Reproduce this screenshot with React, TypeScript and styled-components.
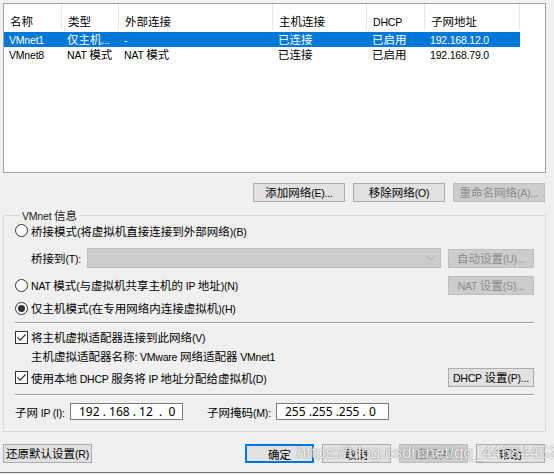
import React from "react";
import styled, { createGlobalStyle, css } from "styled-components";

const GlobalStyle = createGlobalStyle`
    html, body {
        margin: 0;
        padding: 0;
        background: #f0f0f0;
    }
    body {
        font-family: "Noto Sans CJK SC", "Noto Sans", sans-serif;
        font-size: 11.5px;
        color: #000;
    }
`;

const Dialog = styled.div`
    position: relative;
    width: 554px;
    height: 473px;
    box-sizing: border-box;
    padding: 3px 8px 0 3px;
    border-bottom: 1px solid #6b6b6b;
    display: flex;
    flex-direction: column;
    overflow: hidden;
`;

// The Windows UI font draws Latin text much narrower than the CJK glyphs
const Latin = styled.span`
    font-family: "Liberation Sans", Arial, sans-serif;
    font-size: 10.5px;
    letter-spacing: -0.2px;
`;

function Txt({ children }: { children: string }) {
    const parts = children.split(/([\x20-\x7E]+)/).filter((s) => s !== "");
    return (
        <span>
            {parts.map((s, i) =>
                /^[\x20-\x7E]+$/.test(s) ? <Latin key={i}>{s}</Latin> : <React.Fragment key={i}>{s}</React.Fragment>
            )}
        </span>
    );
}

const ListView = styled.div`
    width: 543px;
    height: 170px;
    box-sizing: border-box;
    border: 1px solid #a0a0a0;
    background: #fff;
`;

const HeaderRow = styled.div`
    display: flex;
    height: 26px;
`;

const HeaderCell = styled.div<{ $w: number }>`
    width: ${(p) => p.$w}px;
    box-sizing: border-box;
    padding: 9px 0 0 6px;
    line-height: 16px;
    border-right: 1px solid #e5e5e5;
    white-space: nowrap;
`;

const ItemRows = styled.div`
    margin-top: 2px;
`;

const ItemRow = styled.div<{ $selected?: boolean }>`
    display: flex;
    width: 516px;
    height: 15px;
    line-height: 15px;
    ${(p) =>
        p.$selected &&
        css`
            background: #0078d7;
            color: #fff;
        `}
`;

const ItemCell = styled.div<{ $w: number }>`
    width: ${(p) => p.$w}px;
    box-sizing: border-box;
    padding-left: 5px;
    white-space: nowrap;
    overflow: hidden;
`;

const ListButtons = styled.div`
    display: flex;
    justify-content: flex-end;
    gap: 8px;
    margin: 10px 1px 0 0;
`;

const Button = styled.button<{ $w: number; $default?: boolean }>`
    width: ${(p) => p.$w}px;
    height: 19px;
    padding: 0;
    box-sizing: border-box;
    background: #e1e1e1;
    border: 1px solid #adadad;
    font-family: inherit;
    font-size: 11.5px;
    line-height: 16px;
    color: #000;
    white-space: nowrap;
    &:disabled {
        background: #cccccc;
        border-color: #bfbfbf;
        color: #8a8a8a;
    }
    ${(p) =>
        p.$default &&
        css`
            border: 2px solid #0078d7;
        `}
`;

const Group = styled.fieldset`
    margin: 6px 0 0 0;
    padding: 0 11px 11px 11px;
    width: 543px;
    box-sizing: border-box;
    border: 1px solid #dcdcdc;
    min-width: 0;
`;

const Legend = styled.legend`
    padding: 0 2px;
    margin-left: 5px;
    line-height: 14px;
    color: #1a1a1a;
`;

const Row = styled.div<{ $h: number; $top: number; $indent?: number }>`
    display: flex;
    align-items: center;
    height: ${(p) => p.$h}px;
    margin-top: ${(p) => p.$top}px;
    padding-left: ${(p) => p.$indent ?? 0}px;
    white-space: nowrap;
`;

const Spacer = styled.div`
    flex: 1;
`;

const RadioMark = styled.span<{ $checked?: boolean }>`
    width: 13px;
    height: 13px;
    box-sizing: border-box;
    border: 1px solid #333;
    border-radius: 50%;
    background: #fff;
    display: inline-flex;
    align-items: center;
    justify-content: center;
    margin-right: 3px;
    flex: none;
    &::after {
        content: "";
        width: 7px;
        height: 7px;
        border-radius: 50%;
        background: ${(p) => (p.$checked ? "#333" : "transparent")};
    }
`;

const CheckMark = styled.span`
    width: 13px;
    height: 13px;
    box-sizing: border-box;
    border: 1px solid #333;
    background: #fff;
    display: inline-flex;
    align-items: center;
    justify-content: center;
    margin-right: 3px;
    flex: none;
`;

const Separator = styled.div<{ $top: number }>`
    height: 1px;
    background: #a0a0a0;
    margin-top: ${(p) => p.$top}px;
    box-shadow: 0 1px 0 #fff;
`;

const Select = styled.div`
    width: 354px;
    height: 20px;
    box-sizing: border-box;
    background: #cccccc;
    border: 1px solid #bfbfbf;
    display: flex;
    align-items: center;
    justify-content: flex-end;
    padding-right: 4px;
`;

const Label = styled.span<{ $w: number; $pad?: number }>`
    width: ${(p) => p.$w}px;
    padding-left: ${(p) => p.$pad ?? 0}px;
    box-sizing: border-box;
    flex: none;
`;

const Field = styled.div<{ $w: number }>`
    width: ${(p) => p.$w}px;
    height: 17px;
    box-sizing: border-box;
    background: #fff;
    border: 1px solid #7a7a7a;
    padding-left: 8px;
    font-family: "Noto Sans", sans-serif;
    font-size: 12px;
    line-height: 15px;
    white-space: pre;
`;

const Footer = styled.div`
    display: flex;
    gap: 8px;
    margin: 12px 1px 0 0;
`;

const Watermark = styled.div`
    position: absolute;
    left: 297px;
    top: 442px;
    font-family: "Liberation Sans", Arial, sans-serif;
    font-size: 17px;
    line-height: 22px;
    color: rgba(255, 255, 255, 0.9);
    text-shadow: 0 0 1px rgba(0, 0, 0, 0.45), 0 0 2px rgba(0, 0, 0, 0.2);
    pointer-events: none;
    white-space: nowrap;
`;

const columns = [
    { title: "名称", w: 58 },
    { title: "类型", w: 57 },
    { title: "外部连接", w: 154 },
    { title: "主机连接", w: 94 },
    { title: "DHCP", w: 58 },
    { title: "子网地址", w: 95 },
];

const networks = [
    ["VMnet1", "仅主机...", "-", "已连接", "已启用", "192.168.12.0"],
    ["VMnet8", "NAT 模式", "NAT 模式", "已连接", "已启用", "192.168.79.0"],
];

function Radio({ checked, label }: { checked?: boolean; label: string }) {
    return (
        <>
            <RadioMark $checked={checked} />
            <Txt>{label}</Txt>
        </>
    );
}

function Check({ label }: { label: string }) {
    return (
        <>
            <CheckMark>
                <svg width="11" height="11" viewBox="0 0 11 11">
                    <path d="M1.5 5.5 L4.2 8.2 L9.5 2.5" fill="none" stroke="#333" strokeWidth="1.2" />
                </svg>
            </CheckMark>
            <Txt>{label}</Txt>
        </>
    );
}

export default function App(): JSX.Element {
    return (
        <Dialog>
            <GlobalStyle />
            <ListView>
                <HeaderRow>
                    {columns.map((c) => (
                        <HeaderCell key={c.title} $w={c.w}>
                            <Txt>{c.title}</Txt>
                        </HeaderCell>
                    ))}
                </HeaderRow>
                <ItemRows>
                    {networks.map((n, i) => (
                        <ItemRow key={n[0]} $selected={i === 0}>
                            {n.map((v, j) => (
                                <ItemCell key={j} $w={columns[j].w}>
                                    <Txt>{v}</Txt>
                                </ItemCell>
                            ))}
                        </ItemRow>
                    ))}
                </ItemRows>
            </ListView>

            <ListButtons>
                <Button $w={92}>
                    <Txt>添加网络(E)...</Txt>
                </Button>
                <Button $w={92}>
                    <Txt>移除网络(O)</Txt>
                </Button>
                <Button $w={92} disabled>
                    <Txt>重命名网络(A)...</Txt>
                </Button>
            </ListButtons>

            <Group>
                <Legend>
                    <Txt>VMnet 信息</Txt>
                </Legend>
                <Row $h={15} $top={0}>
                    <Radio label="桥接模式(将虚拟机直接连接到外部网络)(B)" />
                </Row>
                <Row $h={20} $top={10} $indent={16}>
                    <Label $w={56}>
                        <Txt>桥接到(T):</Txt>
                    </Label>
                    <Select>
                        <svg width="10" height="6" viewBox="0 0 10 6">
                            <path d="M1 1 L5 5 L9 1" fill="none" stroke="#a8a8a8" strokeWidth="1" />
                        </svg>
                    </Select>
                    <Spacer />
                    <Button $w={86} disabled>
                        <Txt>自动设置(U)...</Txt>
                    </Button>
                </Row>
                <Row $h={18} $top={8}>
                    <Radio label="NAT 模式(与虚拟机共享主机的 IP 地址)(N)" />
                    <Spacer />
                    <Button $w={86} disabled>
                        <Txt>NAT 设置(S)...</Txt>
                    </Button>
                </Row>
                <Row $h={16} $top={6}>
                    <Radio checked label="仅主机模式(在专用网络内连接虚拟机)(H)" />
                </Row>
                <Separator $top={6} />
                <Row $h={16} $top={6}>
                    <Check label="将主机虚拟适配器连接到此网络(V)" />
                </Row>
                <Row $h={16} $top={3} $indent={16}>
                    <Txt>主机虚拟适配器名称: VMware 网络适配器 VMnet1</Txt>
                </Row>
                <Row $h={19} $top={4}>
                    <Check label="使用本地 DHCP 服务将 IP 地址分配给虚拟机(D)" />
                    <Spacer />
                    <Button $w={86}>
                        <Txt>DHCP 设置(P)...</Txt>
                    </Button>
                </Row>
                <Separator $top={7} />
                <Row $h={17} $top={8}>
                    <Label $w={55}>
                        <Txt>子网 IP (I):</Txt>
                    </Label>
                    <Field $w={113}>{"192 . 168 . 12  .  0"}</Field>
                    <Label $w={93} $pad={24}>
                        <Txt>子网掩码(M):</Txt>
                    </Label>
                    <Field $w={113}>{"255 .255 .255 . 0"}</Field>
                </Row>
            </Group>

            <Footer>
                <Button $w={89}>
                    <Txt>还原默认设置(R)</Txt>
                </Button>
                <Spacer />
                <Button $w={69} $default>
                    确定
                </Button>
                <Button $w={69}>取消</Button>
                <Button $w={69} disabled>
                    <Txt>应用(A)</Txt>
                </Button>
                <Button $w={69}>帮助</Button>
            </Footer>
            <Watermark>https://blog.csdn.net/qq_44684452</Watermark>
        </Dialog>
    );
}
